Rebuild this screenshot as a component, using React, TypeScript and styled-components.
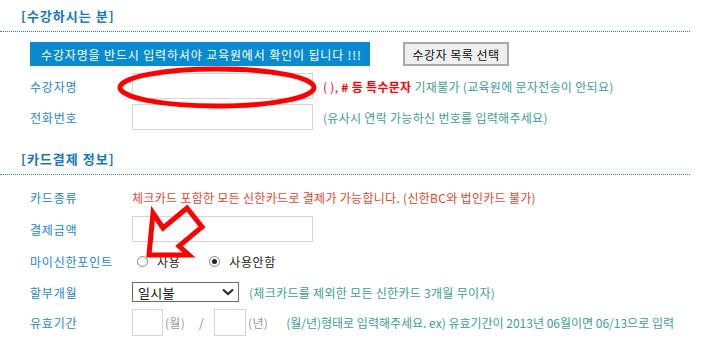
import { FC, JSX, ReactNode } from 'react';
import styled, { createGlobalStyle } from 'styled-components';

const GlobalStyle = createGlobalStyle`
  html, body {
    margin: 0;
    padding: 0;
    background: #fff;
  }
  body {
    font-family: "Noto Sans CJK KR", "Liberation Sans", sans-serif;
    font-size: 12px;
    letter-spacing: 0.3px;
    color: #333;
  }
`;

const Page = styled.div`
  position: relative;
  width: 706px;
  height: 352px;
  overflow: hidden;
`;

const SectionTitle = styled.div<{ $height: number }>`
  height: ${p => p.$height}px;
  display: flex;
  align-items: flex-end;
  padding: 0 0 8px 21px;
  box-sizing: border-box;
  width: 690px;
  border-bottom: 1px dotted #2a7fc8;
  font-size: 13px;
  font-weight: bold;
  line-height: 14px;
  color: #1578c0;
  letter-spacing: 1px;
`;

const Row = styled.div<{ $top: number; $height: number }>`
  display: grid;
  grid-template-columns: 102px 1fr;
  align-items: center;
  padding-left: 30px;
  margin-top: ${p => p.$top}px;
  height: ${p => p.$height}px;
`;

const Label = styled.div`
  color: #1a86cf;
  white-space: nowrap;
  letter-spacing: 0.8px;
`;

const Value = styled.div`
  display: flex;
  align-items: center;
  height: 100%;
  white-space: nowrap;
`;

const BannerRow = styled.div`
  display: flex;
  align-items: center;
  margin: 10px 0 0 30px;
  height: 24px;
  gap: 33px;
`;

const Banner = styled.div`
  width: 340px;
  height: 24px;
  background: #0a8bd0;
  color: #fff;
  display: flex;
  align-items: center;
  padding-left: 11px;
  box-sizing: border-box;
  font-size: 12px;
  letter-spacing: 0.85px;
`;

const ListButton = styled.button`
  width: 106px;
  height: 24px;
  background: #efefef;
  border: 2px solid #a8a8a8;
  font: inherit;
  letter-spacing: 0.5px;
  color: #111;
  padding: 0;
`;

const TextInput = styled.input<{ $w: number; $h: number }>`
  width: ${p => p.$w}px;
  height: ${p => p.$h}px;
  box-sizing: border-box;
  border: 1px solid #d6d6d6;
  margin: 0;
  padding: 0 4px;
  outline: none;
`;

const Note = styled.span<{ $color?: string; $bold?: boolean; $tight?: boolean }>`
  color: ${p => p.$color ?? '#3aa090'};
  font-weight: ${p => (p.$bold ? 'bold' : 'normal')};
  letter-spacing: ${p => (p.$tight ? '0' : 'inherit')};
`;

const After = styled.span<{ $gap?: number }>`
  margin-left: ${p => p.$gap ?? 10}px;
`;

const Unit = styled.span`
  color: #999;
  margin-left: 2px;
`;

const Slash = styled.span`
  color: #888;
  margin: 0 10px 0 14px;
`;

const RadioGroup = styled.label`
  display: flex;
  align-items: center;
  color: #222;
  margin-left: 5px;
  letter-spacing: 0.6px;
  & + & {
    margin-left: 29px;
  }
`;

const RadioDot = styled.span<{ $checked?: boolean }>`
  position: relative;
  width: 11px;
  height: 11px;
  border: 1px solid #888;
  border-radius: 50%;
  box-sizing: border-box;
  margin-right: 9px;
  background: #fff;
  &::after {
    content: '';
    display: ${p => (p.$checked ? 'block' : 'none')};
    position: absolute;
    left: 2px;
    top: 2px;
    width: 5px;
    height: 5px;
    border-radius: 50%;
    background: #222;
  }
`;

const SelectBox = styled.div`
  width: 107px;
  height: 20px;
  box-sizing: border-box;
  border: 1px solid #6a6a6a;
  display: flex;
  align-items: center;
  justify-content: space-between;
  padding: 0 4px 0 5px;
  color: #111;
  font-size: 13px;
`;

const Overlay = styled.svg`
  position: absolute;
  left: 0;
  top: 0;
  pointer-events: none;
`;

interface IFieldProps {
  label: string;
  top: number;
  height: number;
  children: ReactNode;
}

const Field: FC<IFieldProps> = ({label, top, height, children}): JSX.Element => (
  <Row $top={top} $height={height}>
    <Label>{label}</Label>
    <Value>{children}</Value>
  </Row>
);

const Radio: FC<{ text: string; checked?: boolean }> = ({text, checked}): JSX.Element => (
  <RadioGroup>
    <RadioDot $checked={checked}/>
    {text}
  </RadioGroup>
);

const App: FC = (): JSX.Element => {
  return (
    <Page>
      <GlobalStyle/>

      <SectionTitle $height={32}>[수강하시는 분]</SectionTitle>

      <BannerRow>
        <Banner>수강자명을 반드시 입력하셔야 교육원에서 확인이 됩니다 !!!</Banner>
        <ListButton type={'button'}>수강자 목록 선택</ListButton>
      </BannerRow>

      <Field label={'수강자명'} top={7} height={26}>
        <TextInput $w={181} $h={26}/>
        <After>
          <Note $color={'#f00'}>( ), </Note>
          <Note $color={'#f00'} $bold>#&nbsp;등&nbsp;특수문자</Note>
          <Note> 기재불가 (교육원에 문자전송이 안되요)</Note>
        </After>
      </Field>

      <Field label={'전화번호'} top={5} height={26}>
        <TextInput $w={181} $h={26}/>
        <After><Note>(유사시 연락 가능하신 번호를 입력해주세요)</Note></After>
      </Field>

      <SectionTitle $height={45}>[카드결제 정보]</SectionTitle>

      <Field label={'카드종류'} top={10} height={24}>
        <Note $color={'#e4462c'}>체크카드 포함한 모든 신한카드로 결제가 가능합니다. (신한BC와 법인카드 불가)</Note>
      </Field>

      <Field label={'결제금액'} top={7} height={26}>
        <TextInput $w={181} $h={26}/>
      </Field>

      <Field label={'마이신한포인트'} top={8} height={22}>
        <Radio text={'사용'}/>
        <Radio text={'사용안함'} checked/>
      </Field>

      <Field label={'할부개월'} top={10} height={20}>
        <SelectBox>
          <span>일시불</span>
          <svg width="12" height="8" viewBox="0 0 12 8">
            <polyline points="1,1.5 6,6 11,1.5" fill="none" stroke="#1d2a4a" strokeWidth="2.2"/>
          </svg>
        </SelectBox>
        <After><Note>(체크카드를 제외한 모든 신한카드 3개월 무이자)</Note></After>
      </Field>

      <Field label={'유효기간'} top={7} height={27}>
        <TextInput $w={31} $h={27}/>
        <Unit>(월)</Unit>
        <Slash>/</Slash>
        <TextInput $w={32} $h={27}/>
        <Unit>(년)</Unit>
        <After $gap={18}>
          <Note $tight>(월/년)형태로 입력해주세요. ex) 유효기간이 2013년 06월이면 06/13으로 입력</Note>
        </After>
      </Field>

      <Overlay width="706" height="352">
        <ellipse cx="217" cy="87.5" rx="97" ry="18.5" fill="none" stroke="#ff0000" strokeWidth="5"/>
        <polygon points="149,255 153,213 163,228 187,208 202,227 179,246 189,255"
                 fill="none" stroke="#ff0000" strokeWidth="5" strokeLinejoin="miter"/>
      </Overlay>
    </Page>
  );
};

export default App;
